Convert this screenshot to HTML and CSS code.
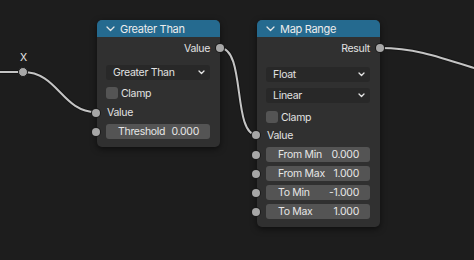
FILE: index.html
```html
<!DOCTYPE html>
<html>
<head>
<meta charset="utf-8">
<link rel="stylesheet" href="styles.css">
</head>
<body>
<div class="canvas">
  <svg class="links" width="474" height="260" viewBox="0 0 474 260">
    <g class="link-shadow">
      <path d="M-10 72 L23 72"/>
      <path d="M23 72 C 58 72, 62 112, 96 112"/>
      <path d="M220 48 C 246 48, 232 135, 257 135"/>
      <path d="M380 48 C 425 48, 450 62, 520 82"/>
    </g>
    <g class="link">
      <path d="M-10 72 L23 72"/>
      <path d="M23 72 C 58 72, 62 112, 96 112"/>
      <path d="M220 48 C 246 48, 232 135, 257 135"/>
      <path d="M380 48 C 425 48, 450 62, 520 82"/>
    </g>
    <circle class="reroute" cx="23" cy="72" r="4.5"/>
  </svg>
  <div class="reroute-label">X</div>

  <div class="node node-gt">
    <div class="header">
      <svg class="chev" width="9" height="6" viewBox="0 0 9 6"><polyline points="1,1 4.5,4.5 8,1"/></svg>
      <span>Greater Than</span>
    </div>
    <div class="body">
      <div class="row out"><span>Value</span><i class="sock sock-r"></i></div>
      <div class="select gt-select"><span>Greater Than</span><svg class="dd" width="7" height="5" viewBox="0 0 7 5"><polyline points="1,1 3.5,3.5 6,1"/></svg></div>
      <div class="row check gt-check"><b class="box"></b><span>Clamp</span></div>
      <div class="row in gt-in"><i class="sock sock-l"></i><span>Value</span></div>
      <div class="field gt-field"><i class="sock sock-l"></i><span>Threshold</span><span>0.000</span></div>
    </div>
  </div>

  <div class="node node-mr">
    <div class="header">
      <svg class="chev" width="9" height="6" viewBox="0 0 9 6"><polyline points="1,1 4.5,4.5 8,1"/></svg>
      <span>Map Range</span>
    </div>
    <div class="body">
      <div class="row out"><span>Result</span><i class="sock sock-r"></i></div>
      <div class="select mr-sel1"><span>Float</span><svg class="dd" width="7" height="5" viewBox="0 0 7 5"><polyline points="1,1 3.5,3.5 6,1"/></svg></div>
      <div class="select mr-sel2"><span>Linear</span><svg class="dd" width="7" height="5" viewBox="0 0 7 5"><polyline points="1,1 3.5,3.5 6,1"/></svg></div>
      <div class="row check mr-check"><b class="box"></b><span>Clamp</span></div>
      <div class="row in mr-in"><i class="sock sock-l"></i><span>Value</span></div>
      <div class="field mr-f1"><i class="sock sock-l"></i><span>From Min</span><span>0.000</span></div>
      <div class="field mr-f"><i class="sock sock-l"></i><span>From Max</span><span>1.000</span></div>
      <div class="field mr-f"><i class="sock sock-l"></i><span>To Min</span><span>-1.000</span></div>
      <div class="field mr-f"><i class="sock sock-l"></i><span>To Max</span><span>1.000</span></div>
    </div>
  </div>
</div>
</body>
</html>
```

FILE: styles.css
```css
* { box-sizing: border-box; }
html, body {
  margin: 0;
  padding: 0;
  background: #1d1d1d;
}
body {
  font-family: Inter, "Noto Sans", "DejaVu Sans", sans-serif;
  font-size: 10.5px;
  letter-spacing: -0.3px;
  color: #e2e2e2;
  white-space: nowrap;
}
.canvas {
  position: relative;
  width: 474px;
  height: 260px;
  overflow: hidden;
  background: #1d1d1d;
}
.links {
  position: absolute;
  left: 0;
  top: 0;
}
.link-shadow path {
  fill: none;
  stroke: #141414;
  stroke-width: 4;
}
.link path {
  fill: none;
  stroke: #c4c4c4;
  stroke-width: 2;
}
.reroute {
  fill: #a8a8a8;
  stroke: #1a1a1a;
  stroke-width: 1;
}
.reroute-label {
  position: absolute;
  left: 20px;
  top: 51px;
  color: #e6e6e6;
}
.node {
  position: absolute;
  width: 123px;
  background: #303030;
  border-radius: 5px;
  box-shadow: 0 2px 6px rgba(0, 0, 0, 0.55);
}
.node-gt { left: 97px; top: 20px; }
.node-mr { left: 257px; top: 20px; }
.header {
  height: 17px;
  background: #256a8f;
  border-radius: 5px 5px 0 0;
  display: flex;
  align-items: center;
  padding-left: 9px;
  gap: 5px;
  color: #ececec;
  font-size: 11px;
}
.chev polyline, .dd polyline {
  fill: none;
  stroke: #e6e6e6;
  stroke-width: 1.3;
  stroke-linecap: round;
  stroke-linejoin: round;
}
.body {
  display: flex;
  flex-direction: column;
  padding: 1px 10px 8px 9px;
}
.row {
  position: relative;
  display: flex;
  align-items: center;
}
.out {
  height: 20px;
  justify-content: flex-end;
}
.sock {
  position: absolute;
  width: 8px;
  height: 8px;
  border-radius: 50%;
  background: #a6a6a6;
  box-shadow: 0 0 0 1px #1a1a1a;
  top: 50%;
  margin-top: -4px;
}
.sock-r { right: -14px; }
.sock-l { left: -14px; }
.select {
  height: 15px;
  background: #282828;
  border-radius: 3px;
  display: flex;
  align-items: center;
  justify-content: space-between;
  padding: 0 5px 0 7px;
}
.gt-select { margin-top: 7px; }
.mr-sel1 { margin-top: 9px; }
.mr-sel2 { margin-top: 6px; }
.check {
  height: 14px;
  gap: 3px;
}
.gt-check { margin-top: 6px; }
.mr-check { margin-top: 7px; }
.box {
  display: block;
  width: 12px;
  height: 12px;
  border-radius: 3px;
  background: #545454;
}
.in { height: 15px; padding-left: 1px; }
.gt-in { margin-top: 5px; }
.mr-in { margin-top: 4px; height: 14px; }
.field {
  position: relative;
  height: 15px;
  background: #545454;
  border-radius: 3px;
  display: flex;
  align-items: center;
  justify-content: space-between;
  padding: 0 11px 0 12px;
  color: #e6e6e6;
}
.gt-field { margin-top: 4px; }
.mr-f1 { margin-top: 5px; }
.mr-f { margin-top: 4px; }
```
